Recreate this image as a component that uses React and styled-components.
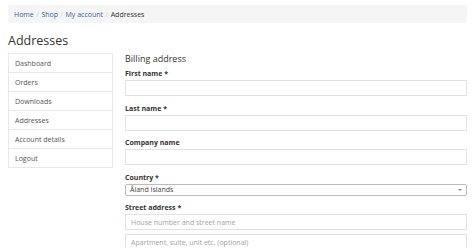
import React from "react";
import styled, { createGlobalStyle } from "styled-components";

const GlobalStyle = createGlobalStyle`
  html, body {
    margin: 0;
    padding: 0;
    background: #ffffff;
  }
  body {
    font-family: "Open Sans", "Liberation Sans", sans-serif;
    font-size: 7px;
    color: #333333;
  }
  * {
    box-sizing: border-box;
  }
`;

const Page = styled.div`
  padding: 5px 7px 0 8px;
  height: 248px;
  overflow: hidden;
`;

const Breadcrumb = styled.nav`
  display: flex;
  align-items: center;
  height: 18px;
  padding: 0 6px;
  background: #f5f5f5;
  border-radius: 2px;
  font-size: 7px;
`;

const Crumb = styled.a`
  color: ${({ active }) => (active ? "#333333" : "#3a63a6")};
  text-decoration: none;
`;

const Sep = styled.span`
  color: #cccccc;
  padding: 0 2.5px;
`;

const Title = styled.h1`
  margin: 10px 0 4px;
  font-size: 12.5px;
  line-height: 16px;
  font-weight: 400;
  color: #333333;
`;

const Columns = styled.div`
  display: flex;
  gap: 12px;
  align-items: flex-start;
`;

const Sidebar = styled.ul`
  list-style: none;
  margin: 0;
  padding: 0;
  width: 105px;
  flex-shrink: 0;
`;

const NavItem = styled.li`
  display: flex;
  align-items: center;
  height: 20px;
  margin-bottom: -1px;
  padding: 0 6px;
  border: 1px solid #e8e8e8;
  color: #555555;
  font-size: 7px;
`;

const Content = styled.div`
  flex: 1;
`;

const Section = styled.h3`
  margin: 0 0 4px;
  font-size: 9px;
  line-height: 11px;
  font-weight: 400;
  color: #333333;
`;

const Field = styled.div`
  margin-bottom: 6.5px;
`;

const Label = styled.label`
  display: block;
  margin-bottom: 1px;
  font-size: 7px;
  line-height: 11px;
  font-weight: 700;
  color: #333333;
`;

const Input = styled.input`
  display: block;
  width: 100%;
  height: 16px;
  margin: 0 0 ${({ gap }) => gap || 0}px;
  padding: 0 5px;
  border: 1px solid #e2e2e2;
  background: #ffffff;
  font-family: inherit;
  font-size: 7px;
  color: #333333;
  outline: none;

  &::placeholder {
    color: #a3a3a3;
  }
`;

const Select = styled.div`
  position: relative;
  display: flex;
  align-items: center;
  height: 12px;
  padding: 0 4px;
  border: 1px solid #bbbbbb;
  border-radius: 2px;
  background: #ffffff;
  color: #444444;
  font-size: 7px;
`;

const Arrow = styled.span`
  position: absolute;
  right: 4px;
  top: 50%;
  margin-top: -1px;
  width: 0;
  height: 0;
  border-left: 2px solid transparent;
  border-right: 2px solid transparent;
  border-top: 2.5px solid #888888;
`;

const menu = [
  "Dashboard",
  "Orders",
  "Downloads",
  "Addresses",
  "Account details",
  "Logout",
];

const App = () => {
  return (
    <>
      <GlobalStyle />
      <Page>
        <Breadcrumb>
          <Crumb href="#">Home</Crumb>
          <Sep>/</Sep>
          <Crumb href="#">Shop</Crumb>
          <Sep>/</Sep>
          <Crumb href="#">My account</Crumb>
          <Sep>/</Sep>
          <Crumb active>Addresses</Crumb>
        </Breadcrumb>

        <Title>Addresses</Title>

        <Columns>
          <Sidebar>
            {menu.map((item) => (
              <NavItem key={item}>{item}</NavItem>
            ))}
          </Sidebar>

          <Content>
            <Section>Billing address</Section>

            <Field>
              <Label>First name *</Label>
              <Input />
            </Field>
            <Field>
              <Label>Last name *</Label>
              <Input />
            </Field>
            <Field>
              <Label>Company name</Label>
              <Input />
            </Field>
            <Field>
              <Label>Country *</Label>
              <Select>
                Åland Islands
                <Arrow />
              </Select>
            </Field>
            <Field>
              <Label>Street address *</Label>
              <Input gap={4} placeholder="House number and street name" />
              <Input placeholder="Apartment, suite, unit etc. (optional)" />
            </Field>
          </Content>
        </Columns>
      </Page>
    </>
  );
};

export default App;
